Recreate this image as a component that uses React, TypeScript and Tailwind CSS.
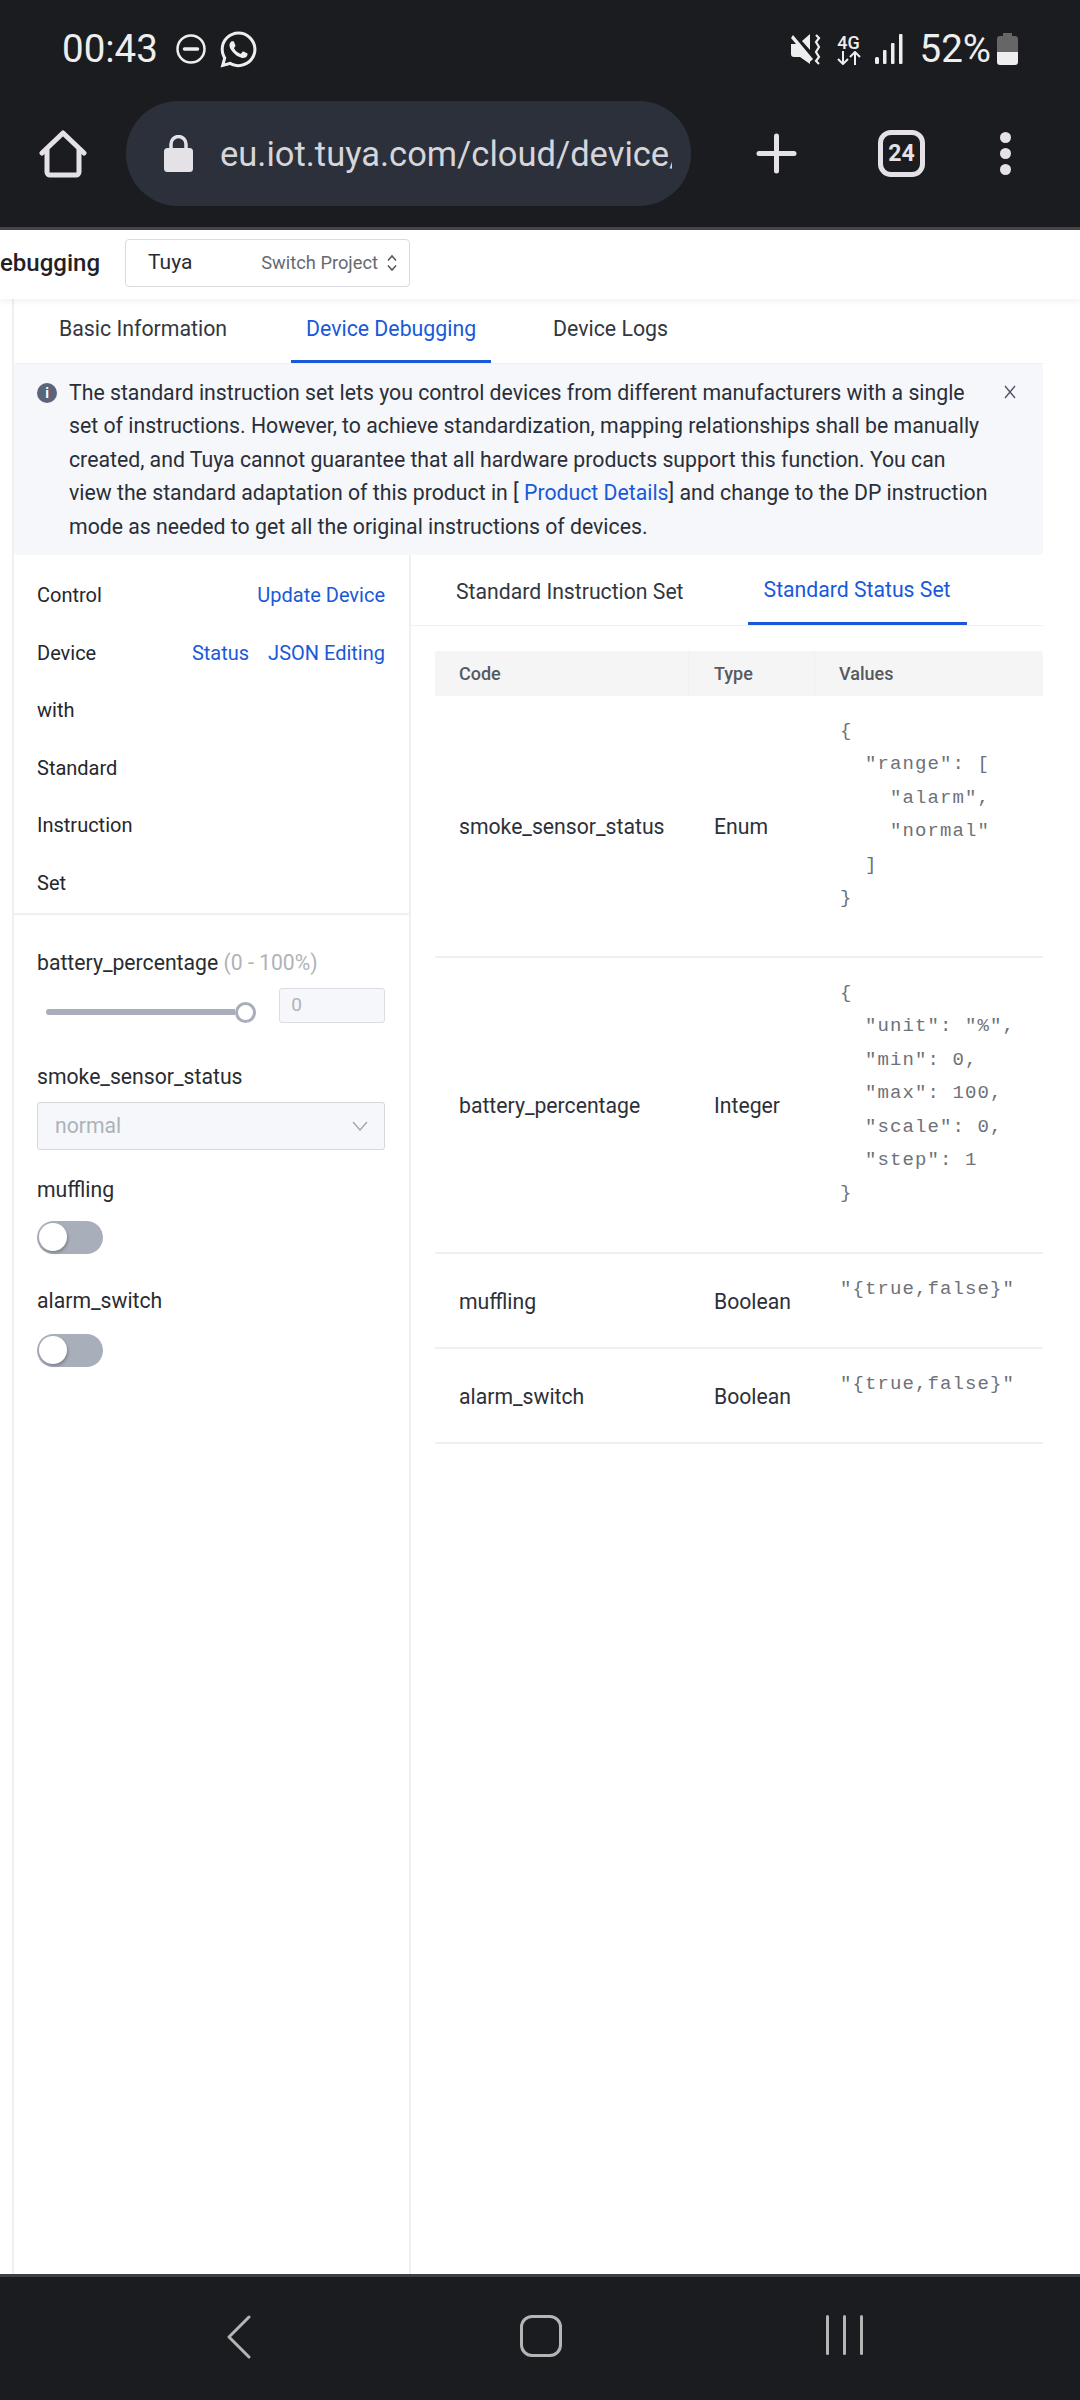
import { FaWhatsapp } from 'react-icons/fa';

const statusRows = [
  {
    code: 'smoke_sensor_status',
    type: 'Enum',
    height: 'h-[262px]',
    value: `{
  "range": [
    "alarm",
    "normal"
  ]
}`,
  },
  {
    code: 'battery_percentage',
    type: 'Integer',
    height: 'h-[296px]',
    value: `{
  "unit": "%",
  "min": 0,
  "max": 100,
  "scale": 0,
  "step": 1
}`,
  },
  { code: 'muffling', type: 'Boolean', height: 'h-[95px]', value: '"{true,false}"' },
  { code: 'alarm_switch', type: 'Boolean', height: 'h-[95px]', value: '"{true,false}"' },
];

function StatusBar() {
  return (
    <div className="flex h-[90px] items-start justify-between bg-[#1b1c20] pl-[62px] pr-[62px] pt-[27px] text-[#eeeeee]">
      <div className="flex items-center">
        <span className="text-[38.500px] leading-[44px]">00:43</span>
        <svg className="ml-[18px]" width="30" height="30" viewBox="0 0 30 30" fill="none" stroke="#eeeeee">
          <circle cx="15" cy="15" r="13.5" strokeWidth="2.5" />
          <path d="M8.5 15h13" strokeWidth="3.5" strokeLinecap="round" />
        </svg>
        <FaWhatsapp className="ml-[12px]" size={41} color="#eeeeee" />
      </div>
      <div className="flex items-center">
        <svg width="32" height="32" viewBox="0 0 32 32" fill="#eeeeee" className="mr-[14px]">
          <path d="M3 2l20 24-2.5 2.5L1 5z" />
          <path d="M1 11h6l2 1 11 13v6l-10-7H4a3 3 0 0 1-3-3zM12 8l8-7v16z" />
          <path d="M26 2l3 3-3 4 3 5-3 5 3 5-3 4 3 3" fill="none" stroke="#eeeeee" strokeWidth="2.2" />
        </svg>
        <div className="mr-[12px] flex w-[26px] flex-col items-center">
          <span className="text-[18px] font-medium leading-[17px]">4G</span>
          <svg width="26" height="14" viewBox="0 0 26 14" fill="none" stroke="#eeeeee" strokeWidth="2">
            <path d="M7 0v12M2 8l5 5 5-5M19 14V2M14 6l5-5 5 5" />
          </svg>
        </div>
        <svg width="30" height="30" viewBox="0 0 30 30" fill="#eeeeee" className="mr-[16px]">
          <rect x="1" y="23" width="4" height="7" rx="1.5" />
          <rect x="9" y="16" width="3.5" height="14" rx="1" />
          <rect x="17" y="9" width="3.5" height="21" rx="1" />
          <rect x="25" y="0" width="3.5" height="30" rx="1" />
        </svg>
        <span className="text-[38.500px] leading-[44px]">52%</span>
        <svg width="21" height="32" viewBox="0 0 21 32" className="ml-[6px]">
          <path d="M6 0h9v3h3a3 3 0 0 1 3 3v13H0V6a3 3 0 0 1 3-3h3z" fill="#666666" />
          <path d="M0 19h21v10a3 3 0 0 1-3 3H3a3 3 0 0 1-3-3z" fill="#eeeeee" />
        </svg>
      </div>
    </div>
  );
}

function BrowserBar() {
  return (
    <div className="flex h-[137px] items-start bg-[#1b1c20] pt-[11px] text-[#e4e2e7]">
      <div className="flex h-[105px] w-[126px] items-center justify-center">
        <svg width="48" height="48" viewBox="0 0 48 48" fill="none" stroke="#e4e2e7" strokeWidth="5" strokeLinejoin="round" strokeLinecap="round">
          <path d="M3 23L24 3l21 20" />
          <path d="M8 20v22a3 3 0 0 0 3 3h26a3 3 0 0 0 3-3V20" />
        </svg>
      </div>
      <div className="flex h-[105px] w-[565px] items-center overflow-hidden rounded-[52px] bg-[#2b303a] pl-[38px]">
        <svg width="29" height="37" viewBox="0 0 29 37" className="shrink-0">
          <path d="M7 15V9a7.500 7.500 0 0 1 15 0v6" fill="none" stroke="#e4e2e7" strokeWidth="3.500" />
          <rect x="0" y="13" width="29" height="24" rx="3.500" fill="#e4e2e7" />
        </svg>
        <div className="ml-[27px] w-[452px] overflow-hidden whitespace-nowrap text-[34.500px] leading-[44px] text-[#d6d5da]">
          eu.iot.tuya.com/cloud/device/
        </div>
      </div>
      <div className="flex h-[105px] flex-1 items-center">
        <svg width="41" height="41" viewBox="0 0 41 41" stroke="#e4e2e7" strokeWidth="5" strokeLinecap="round" className="ml-[65px]">
          <path d="M20.500 3v35M3 20.500h35" />
        </svg>
        <div className="ml-[81px] flex h-[47px] w-[47px] items-center justify-center rounded-[13px] border-[5px] border-[#e4e2e7] text-[23px] font-bold leading-none">
          24
        </div>
        <div className="ml-[75px] flex flex-col gap-[5px]">
          <span className="h-[11px] w-[11px] rounded-full bg-[#e4e2e7]" />
          <span className="h-[11px] w-[11px] rounded-full bg-[#e4e2e7]" />
          <span className="h-[11px] w-[11px] rounded-full bg-[#e4e2e7]" />
        </div>
      </div>
    </div>
  );
}

function ProjectHeader() {
  return (
    <div className="relative z-10 flex h-[69px] shrink-0 items-center bg-white pb-[3px] shadow-[0_3px_6px_rgba(0,0,0,0.05)]">
      <div className="w-[99px] whitespace-nowrap text-[24px] font-medium leading-[30px] text-[#1f2126]">ebugging</div>
      <div className="ml-[26px] flex h-[48px] w-[285px] items-center rounded-[4px] border border-[#d9dbe0] pl-[22px] pr-[11px]">
        <span className="text-[21px] text-[#2a2c31]">Tuya</span>
        <span className="ml-auto text-[18.300px] text-[#666a70]">Switch Project</span>
        <svg width="12" height="18" viewBox="0 0 12 18" fill="none" stroke="#555555" strokeWidth="1.500" className="ml-[8px]">
          <path d="M2 6.500L6 2l4 4.500M2 11.500L6 16l4-4.500" />
        </svg>
      </div>
    </div>
  );
}

function TopTabs() {
  return (
    <div className="flex h-[65px] shrink-0 items-stretch border-b border-[#eef0f2] text-[21.300px] text-[#333740]">
      <div className="flex items-center pb-[4px] pl-[45px]">Basic Information</div>
      <div className="ml-[64px] flex w-[200px] items-center justify-center border-b-[3px] border-[#1959d9] pb-[1px] text-[#1959d9]">
        Device Debugging
      </div>
      <div className="ml-[62px] flex items-center pb-[4px]">Device Logs</div>
    </div>
  );
}

function Notice() {
  return (
    <div className="relative flex h-[191px] shrink-0 rounded-[4px] bg-[#f5f7fa] pl-[55px] pt-[12px] text-[21.250px] leading-[33.400px] text-[#2a2e38]">
      <span className="absolute left-[23px] top-[19px] flex h-[20px] w-[20px] items-center justify-center rounded-full bg-[#5b6478] text-[14px] font-bold leading-none text-white">
        i
      </span>
      <p className="w-[950px]">
        The standard instruction set lets you control devices from different manufacturers with a single
        <br />
        set of instructions. However, to achieve standardization, mapping relationships shall be manually
        <br />
        created, and Tuya cannot guarantee that all hardware products support this function. You can
        <br />
        view the standard adaptation of this product in [ <span className="text-[#1959d9]">Product Details</span>] and
        change to the DP instruction
        <br />
        mode as needed to get all the original instructions of devices.
      </p>
      <svg width="12" height="14" viewBox="0 0 12 14" stroke="#4a5060" strokeWidth="1.300" className="absolute left-[990px] top-[21px]">
        <path d="M1 1l10 12M11 1L1 13" />
      </svg>
    </div>
  );
}

function Toggle() {
  return (
    <div className="flex h-[33px] w-[66px] items-center rounded-full bg-[#a9aebb] pl-[2px]">
      <span className="h-[28px] w-[28px] rounded-full bg-white shadow-[1px_2px_3px_rgba(0,0,0,0.25)]" />
    </div>
  );
}

function ControlPanel() {
  return (
    <div className="w-[397px] shrink-0 border-r-2 border-[#eef0f2]">
      <div className="flex justify-between border-b-2 border-[#eef0f2] pb-0 pl-[23px] pr-[24px] pt-[12px] text-[20px] leading-[57.600px]">
        <div className="w-[100px] text-[#25272c]">Control Device with Standard Instruction Set</div>
        <div className="flex flex-col items-end text-[#1959d9]">
          <span>Update Device</span>
          <span className="flex gap-[19px]">
            <span>Status</span>
            <span>JSON Editing</span>
          </span>
        </div>
      </div>
      <div className="pl-[23px] pr-[24px] pt-[33px] text-[21.200px] leading-[30px] text-[#2a2c31]">
        <div>
          battery_percentage <span className="text-[#b0b3b8]">(0 - 100%)</span>
        </div>
        <div className="mt-[10px] flex items-start">
          <div className="ml-[9px] mt-[14px] flex w-[211px] items-center">
            <span className="h-[6px] flex-1 rounded-l-full bg-[#a9aebb]" />
            <span className="h-[21px] w-[21px] rounded-full border-[3px] border-[#a9aebb] bg-white" />
          </div>
          <div className="ml-[23px] flex h-[35px] w-[106px] items-center rounded-[3px] border border-[#d9dce1] bg-[#f5f7fa] pl-[11px] text-[19px] text-[#b0b3b8]">
            0
          </div>
        </div>
        <div className="mt-[39px]">smoke_sensor_status</div>
        <div className="mt-[10px] flex h-[48px] items-center justify-between rounded-[3px] border border-[#d5d8dd] bg-[#f5f7fa] pl-[17px] pr-[16px] text-[#aeb2b9]">
          normal
          <svg width="16" height="10" viewBox="0 0 16 10" fill="none" stroke="#a0a4ab" strokeWidth="1.300">
            <path d="M1 1l7 8 7-8" />
          </svg>
        </div>
        <div className="mt-[25px]">muffling</div>
        <div className="mt-[16px]">
          <Toggle />
        </div>
        <div className="mt-[32px]">alarm_switch</div>
        <div className="mt-[18px]">
          <Toggle />
        </div>
      </div>
    </div>
  );
}

function StatusTable() {
  return (
    <div className="flex-1">
      <div className="flex h-[71px] items-stretch border-b border-[#eef0f2] text-[21.200px] text-[#333740]">
        <div className="flex items-center pl-[45px] pt-[3px]">Standard Instruction Set</div>
        <div className="ml-[64px] flex w-[219px] items-center justify-center border-b-[3px] border-[#1959d9] pt-[3px] text-[#1959d9]">
          Standard Status Set
        </div>
      </div>
      <div className="ml-[24px] mt-[25px]">
        <div className="grid h-[45px] grid-cols-[253px_126px_1fr] items-center rounded-t-[2px] bg-[#f5f5f5] text-[18px] font-medium text-[#555960]">
          <span className="pl-[24px]">Code</span>
          <span className="flex h-full items-center border-l border-[#f0f0f0] pl-[25px]">Type</span>
          <span className="flex h-full items-center border-l border-[#f0f0f0] pl-[24px]">Values</span>
        </div>
        {statusRows.map((row) => (
          <div key={row.code} className={`grid ${row.height} grid-cols-[253px_126px_1fr] items-center border-b-2 border-[#eef0f2] text-[21.200px] text-[#2d3038]`}>
            <span className="pl-[24px] pt-[2px]">{row.code}</span>
            <span className="pl-[26px] pt-[2px]">{row.type}</span>
            <pre className="self-start pl-[26px] pt-[19px] font-['Liberation_Mono',monospace] text-[19px] font-light leading-[33.400px] tracking-[1.100px] text-[#6e7178]">
              {row.value}
            </pre>
          </div>
        ))}
      </div>
    </div>
  );
}

function NavBar() {
  return (
    <div className="flex h-[126px] shrink-0 items-start border-t-[3px] border-[#3e3f43] bg-[#1b1c20] pt-[38px]">
      <svg width="24" height="44" viewBox="0 0 24 44" fill="none" stroke="#b5b5b5" strokeWidth="3" strokeLinecap="round" strokeLinejoin="round" className="ml-[227px]">
        <path d="M22 2L2 22l20 20" />
      </svg>
      <div className="ml-[269px] h-[42px] w-[42px] rounded-[12px] border-[3px] border-[#b5b5b5]" />
      <div className="ml-[264px] flex h-[40px] gap-[14px]">
        <span className="w-[3px] rounded-full bg-[#b5b5b5]" />
        <span className="w-[3px] rounded-full bg-[#b5b5b5]" />
        <span className="w-[3px] rounded-full bg-[#b5b5b5]" />
      </div>
    </div>
  );
}

export default function App() {
  return (
    <div className="flex h-[2400px] w-[1080px] flex-col overflow-hidden bg-white font-['Roboto',sans-serif]">
      <StatusBar />
      <BrowserBar />
      <div className="h-[3px] shrink-0 bg-[#45464a]" />
      <ProjectHeader />
      <div className="ml-[12px] flex w-[1031px] flex-1 flex-col border-l-2 border-[#eef0f2]">
        <TopTabs />
        <Notice />
        <div className="flex flex-1">
          <ControlPanel />
          <StatusTable />
        </div>
      </div>
      <NavBar />
    </div>
  );
}
